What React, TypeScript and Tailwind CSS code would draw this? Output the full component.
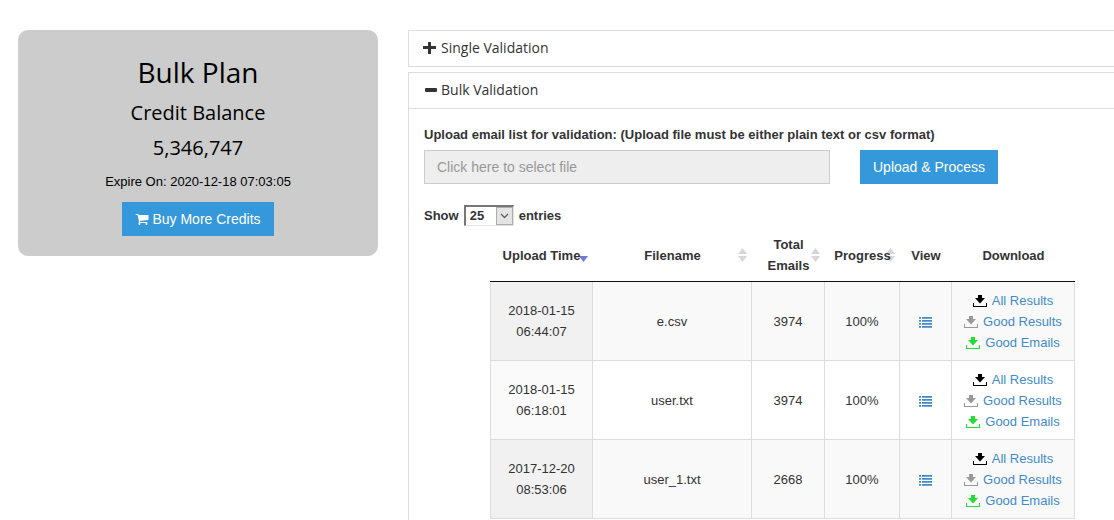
import React, { useState } from "react"

interface Upload {
  id: number
  date: string
  time: string
  filename: string
  total: number
  progress: number
}

const UPLOADS: Upload[] = [
  { id: 1, date: "2018-01-15", time: "06:44:07", filename: "e.csv", total: 3974, progress: 100 },
  { id: 2, date: "2018-01-15", time: "06:18:01", filename: "user.txt", total: 3974, progress: 100 },
  { id: 3, date: "2017-12-20", time: "08:53:06", filename: "user_1.txt", total: 2668, progress: 100 },
]

const DOWNLOADS = [
  { label: "All Results", color: "text-black" },
  { label: "Good Results", color: "text-[#999999]" },
  { label: "Good Emails", color: "text-[#22dd33]" },
]

export default function App() {
  const [singleOpen, setSingleOpen] = useState(false)
  const [bulkOpen, setBulkOpen] = useState(true)

  return (
    <div className="flex gap-[30px] overflow-hidden bg-white pt-[30px] pl-[18px] font-['Liberation_Sans',Arial,sans-serif] text-[13px] leading-[21px] text-[#333333]">
      <PlanCard />
      <main className="flex min-w-0 flex-1 flex-col gap-[5px]">
        <Panel title="Single Validation" open={singleOpen} onToggle={() => setSingleOpen(!singleOpen)}>
          <label htmlFor="email" className="block font-bold">Email address:</label>
          <input id="email" type="email" className="h-[34px] w-full border border-[#cccccc] px-3" />
        </Panel>
        <Panel title="Bulk Validation" open={bulkOpen} onToggle={() => setBulkOpen(!bulkOpen)}>
          <UploadForm />
          <EntriesSelect />
          <UploadTable />
        </Panel>
      </main>
    </div>
  )
}

function PlanCard() {
  return (
    <aside className="flex w-[360px] shrink-0 flex-col items-center self-start rounded-[10px] bg-[#cccccc] pt-6 pb-5 text-black">
      <h1 className="font-['Open_Sans',sans-serif] text-[28px] leading-9">Bulk Plan</h1>
      <h2 className="mt-[6px] font-['Open_Sans',sans-serif] text-xl leading-[34px]">Credit Balance</h2>
      <p className="font-['Open_Sans',sans-serif] text-xl leading-9">5,346,747</p>
      <p className="mt-[5px]">Expire On: 2020-12-18 07:03:05</p>
      <button type="button" className="mt-[10px] flex h-[34px] items-center gap-[3px] bg-[#3498db] px-[13px] text-sm text-white">
        <CartIcon />
        Buy More Credits
      </button>
    </aside>
  )
}

interface PanelProps {
  title: string
  open: boolean
  onToggle: () => void
  children: React.ReactNode
}

function Panel({ title, open, onToggle, children }: PanelProps) {
  return (
    <section className="border border-r-0 border-[#dddddd]">
      <button
        type="button"
        aria-expanded={open}
        onClick={onToggle}
        className="flex h-[35px] w-full items-center gap-1 pb-[2px] pl-[14px] text-left font-['Open_Sans',sans-serif] text-sm"
      >
        <ToggleIcon open={open} />
        {title}
      </button>
      {open && <div className="border-t border-[#dddddd] p-[15px]">{children}</div>}
    </section>
  )
}

function UploadForm() {
  return (
    <form onSubmit={(e) => e.preventDefault()}>
      <label htmlFor="file" className="block font-bold">
        Upload email list for validation: (Upload file must be either plain text or csv format)
      </label>
      <div className="mt-[5px] flex gap-[30px]">
        <input
          id="file"
          type="text"
          readOnly
          placeholder="Click here to select file"
          className="h-[34px] max-w-[406px] min-w-0 flex-1 border border-[#cccccc] bg-[#eeeeee] px-3 text-sm placeholder:text-[#999999]"
        />
        <button type="submit" className="h-[34px] shrink-0 bg-[#3498db] px-[13px] text-sm text-white">
          Upload &amp; Process
        </button>
      </div>
    </form>
  )
}

function EntriesSelect() {
  return (
    <label className="mt-[21px] flex h-[21px] items-center gap-[5px] font-bold">
      Show
      <span className="relative">
        <select
          defaultValue="25"
          className="block h-[21px] w-[50px] appearance-none border-t-2 border-r border-b border-l-2 border-t-[#777777] border-r-[#e3e3e3] border-b-[#e3e3e3] border-l-[#777777] bg-white pl-1 leading-[18px] font-bold"
        >
          <option>10</option>
          <option>25</option>
          <option>50</option>
          <option>100</option>
        </select>
        <span className="pointer-events-none absolute top-[2px] right-[1px] flex h-[18px] w-[17px] items-center justify-center border border-[#adadad] bg-[#e4e4e4]">
          <svg width="9" height="6" viewBox="0 0 9 6" fill="none" stroke="#606060" strokeWidth="1.3">
            <path d="M1 1l3.5 3.5L8 1" />
          </svg>
        </span>
      </span>
      entries
    </label>
  )
}

function UploadTable() {
  return (
    <div className="mt-[5px] pr-[24px] pl-[66px]">
      <table className="w-full table-fixed border-separate border-spacing-0 text-center">
        <colgroup>
          <col className="w-[103px]" />
          <col />
          <col className="w-[73px]" />
          <col className="w-[75px]" />
          <col className="w-[52px]" />
          <col className="w-[123px]" />
        </colgroup>
        <thead>
          <tr>
            <HeaderCell sort="desc">Upload Time</HeaderCell>
            <HeaderCell sort="none">Filename</HeaderCell>
            <HeaderCell sort="none">Total<br />Emails</HeaderCell>
            <HeaderCell sort="none">Progress</HeaderCell>
            <HeaderCell>View</HeaderCell>
            <HeaderCell>Download</HeaderCell>
          </tr>
        </thead>
        <tbody>
          {UPLOADS.map((upload) => (
            <tr key={upload.id} className="group odd:bg-[#f9f9f9]">
              <td className="border-r border-b border-l border-[#dddddd] bg-[#fafafa] px-2 py-[8px] group-odd:bg-[#f1f1f1]">
                {upload.date}<br />{upload.time}
              </td>
              <td className="border-r border-b border-[#dddddd]">{upload.filename}</td>
              <td className="border-r border-b border-[#dddddd]">{upload.total}</td>
              <td className="border-r border-b border-[#dddddd]">{upload.progress}%</td>
              <td className="border-r border-b border-[#dddddd]">
                <a href="#view" aria-label={`View ${upload.filename}`} className="inline-block align-middle text-[#428bca]">
                  <ListIcon />
                </a>
              </td>
              <td className="border-r border-b border-[#dddddd] pt-2 pb-[7px]">
                {DOWNLOADS.map(({ label, color }) => (
                  <a key={label} href="#download" className="flex items-center justify-center gap-[5px] text-[#428bca]">
                    <DownloadIcon className={color} />
                    {label}
                  </a>
                ))}
              </td>
            </tr>
          ))}
        </tbody>
      </table>
    </div>
  )
}

function HeaderCell({ sort, children }: { sort?: "none" | "desc", children: React.ReactNode }) {
  return (
    <th className="relative border-b border-[#111111] pt-[3px] pb-[5px] font-bold whitespace-nowrap">
      {sort && (
        <svg className="absolute top-1/2 right-[5px] -mt-[8px]" width="9" height="14" viewBox="0 0 9 14">
          {sort === "none" && <path d="M4.5 0L9 6H0z" fill="#d6d6da" />}
          <path d={sort === "desc" ? "M0 8h9l-4.5 6z" : "M0 8h9l-4.5 6z"} fill={sort === "desc" ? "#7378d8" : "#d6d6da"} />
        </svg>
      )}
      <span className="relative">{children}</span>
    </th>
  )
}

function ToggleIcon({ open }: { open: boolean }) {
  return (
    <svg width="14" height="14" viewBox="0 0 14 14" fill="currentColor">
      {open ? (
        <rect x="2" y="5" width="12" height="4" rx="1" />
      ) : (
        <path d="M5.500 1h2a.5.5 0 0 1 .5.5V5h4.500a.5.5 0 0 1 .5.5v2a.5.5 0 0 1-.5.5H8v4.500a.5.5 0 0 1-.5.5h-2a.5.5 0 0 1-.5-.5V8H.5a.5.5 0 0 1-.5-.5v-2a.5.5 0 0 1 .5-.5H5V1.500a.5.5 0 0 1 .5-.5z" />
      )}
    </svg>
  )
}

function CartIcon() {
  return (
    <svg width="14" height="14" viewBox="0 0 1792 1792" fill="currentColor">
      <path d="M704 1536q0 52-38 90t-90 38-90-38-38-90 38-90 90-38 90 38 38 90zm896 0q0 52-38 90t-90 38-90-38-38-90 38-90 90-38 90 38 38 90zm128-1088v512q0 24-16.500 42.500t-40.500 21.500l-1044 122q13 60 13 70 0 16-24 64h920q26 0 45 19t19 45-19 45-45 19h-1024q-26 0-45-19t-19-45q0-11 8-31.500t16-36 21.500-40 15.500-29.500l-177-823h-204q-26 0-45-19t-19-45 19-45 45-19h256q16 0 28.500 6.500t19.500 15.500 13 24.500 8 26 5.500 29.500 4.500 26h1201q26 0 45 19t19 45z" />
    </svg>
  )
}

function ListIcon() {
  return (
    <svg width="13" height="11" viewBox="0 0 13 11" fill="currentColor">
      {[0, 3, 6, 9].map((y) => (
        <path key={y} d={`M0 ${y}h2v1.700H0zM3 ${y}h10v1.700H3z`} />
      ))}
    </svg>
  )
}

function DownloadIcon({ className }: { className: string }) {
  return (
    <svg className={className} width="14" height="12" viewBox="0 0 14 12" fill="currentColor">
      <path d="M5 0h4v3h3L7 8.500 2 3h3zM0 8h1v3h12V8h1v4H0z" />
    </svg>
  )
}
